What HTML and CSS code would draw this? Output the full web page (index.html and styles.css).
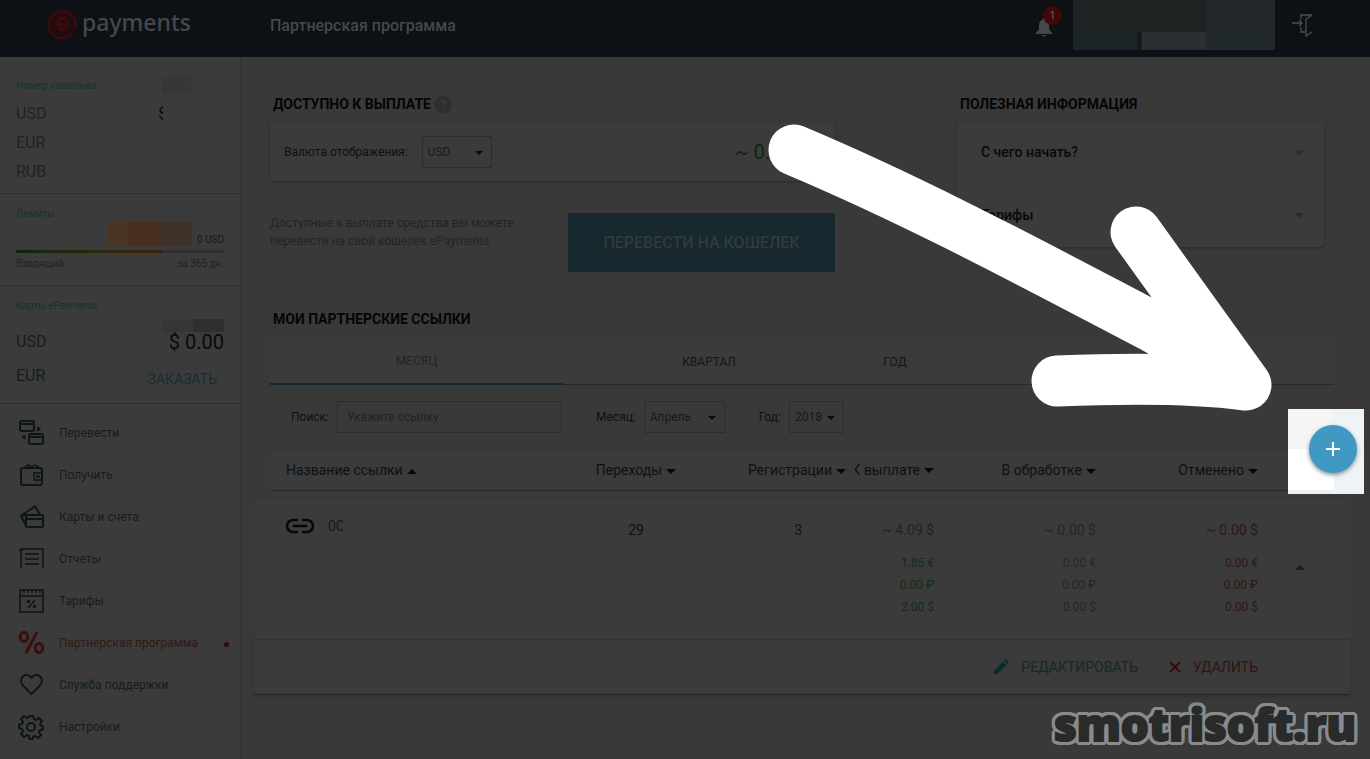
FILE: index.html
```html
<!DOCTYPE html>
<html lang="ru">
<head>
<meta charset="utf-8">
<title>Партнерская программа</title>
<link rel="stylesheet" href="styles.css">
</head>
<body>
<header class="topbar">
  <a class="logo" href="#">
    <svg width="32" height="34" viewBox="0 0 32 34" fill="none" stroke="#3c0b0e"><circle cx="16" cy="17" r="15" fill="#220b0f" stroke="none"/><path d="M24 28A13.500 13.500 0 1 1 28.500 20" stroke-width="2"/><path d="M11 18h9c2-6-5-9-8-4-3 6 1 11 7 8" stroke-width="3"/></svg>
    <span>payments</span>
  </a>
  <h1 class="page-title">Партнерская программа</h1>
  <div class="tools">
    <button class="bell" aria-label="Уведомления">
      <svg width="18" height="20" viewBox="0 0 18 20" fill="#44484a"><path d="M9 1c1 0 1.500.6 1.500 1.500C13 3.500 14 6 14 9v3l3 4v1H1v-1l3-4V9c0-3 1-5.500 3.500-6.500C7.500 1.600 8 1 9 1zM7 18h4c0 2-4 2-4 0z"/></svg>
      <span class="badge">1</span>
    </button>
    <div class="account"><i class="a1"></i><i class="a2"></i><i class="a3"></i><i class="a4"></i><i class="a5"></i><i class="a6"></i></div>
    <button class="exit" aria-label="Выход">
      <svg width="22" height="24" viewBox="0 0 22 24" fill="none" stroke="#4b4f52" stroke-width="1.300"><path d="M0 10h10M7 7l3 3-3 3M9 6V2h11M9 14v5h4M20 2l-6 4v17l6-4"/></svg>
    </button>
  </div>
</header>
<div class="layout">
  <aside class="sidebar">
    <section class="wallet">
      <h2 class="side-title">Номер кошелька</h2>
      <div class="row"><span>USD</span><b class="cut">$</b></div>
      <div class="row"><span>EUR</span></div>
      <div class="row"><span>RUB</span></div>
      <div class="mask"></div>
    </section>
    <section class="limits">
      <h2 class="side-title">Лимиты</h2>
      <div class="amount"><i></i><span class="clip">0 USD</span></div>
      <div class="bar"><div class="fill"></div></div>
      <div class="captions"><span>Входящий</span><span>за 365 дн.</span></div>
    </section>
    <section class="cards">
      <h2 class="side-title">Карты ePayments</h2>
      <div class="card-mask"></div>
      <div class="row strong"><span>USD</span><span class="sum">$ 0.00</span></div>
      <div class="row strong"><span>EUR</span><a class="order" href="#">ЗАКАЗАТЬ</a></div>
    </section>
    <nav class="nav">
      <a href="#"><svg viewBox="0 0 26 26"><rect x="2" y="1" width="14" height="10" rx="2"/><path d="M2 4h14M11 17h14"/><rect x="11" y="14" width="14" height="10" rx="2"/><path d="M19.500 7v4l3-2zM7 15v4l-3-2z" fill="#0d1517" stroke-width="1"/></svg>Перевести</a>
      <a href="#"><svg viewBox="0 0 26 26"><rect x="3" y="6" width="21" height="17" rx="2"/><path d="M6 6l4-3 4 2 2-2 4 1v2" stroke-width="1.500"/><path d="M24 11h-8v7h8M19 14h2v1h-2z" stroke-width="1.500"/></svg>Получить</a>
      <a href="#"><svg viewBox="0 0 26 26"><rect x="8" y="11" width="17" height="12" rx="1"/><path d="M8 15h17M8 22L3 11.500 17 2.500l5 8M5 11h5"/></svg>Карты и счета</a>
      <a href="#"><svg viewBox="0 0 26 26" class="thin"><path d="M3 22V3h22v19M1 4h4M7 8h14M7 13h14M7 18h14"/></svg>Отчеты</a>
      <a href="#"><svg viewBox="0 0 26 26" class="thin"><path d="M2 2h23v22H2zM2 8h23M6 2v3M10 2v3M14 2v3M18 2v3M22 2v3M17 12l-7 8"/><circle cx="10.500" cy="13.500" r="1"/><circle cx="16.500" cy="18.500" r="1"/></svg>Тарифы</a>
      <a href="#" class="current"><svg viewBox="0 0 26 26"><ellipse cx="6" cy="7" rx="3.700" ry="4.500"/><ellipse cx="21" cy="18" rx="3.700" ry="4.500"/><path d="M19 2L8 23"/></svg>Партнерская программа</a>
      <a href="#"><svg viewBox="0 0 26 26"><path d="M13.500 22L5 13.500C-.5 7 7.500-1.500 13.500 5.500 19.500-1.500 27.500 7 22 13.500z"/></svg>Служба поддержки</a>
      <a href="#"><svg viewBox="0 0 26 26"><circle cx="13" cy="13" r="4"/><path d="M11 2h4l1 3 2 1 3-2 3 3-2 3 1 2 2 .500v3L22 16l-1 2 2 3-3 3-3-2-2 1-.500 2h-3L11 22l-2-1-3 2-3-3 2-3-1-2-3-1v-3l3-1 1-2-2-3 3-3 3 2 2-1z"/></svg>Настройки</a>
    </nav>
  </aside>
  <main class="main">
    <div class="top">
      <section class="payout">
        <h2 class="heading">ДОСТУПНО К ВЫПЛАТЕ <span class="hint">?</span></h2>
        <div class="panel currency">
          <label for="cur">Валюта отображения:</label>
          <span class="select"><select id="cur"><option>USD</option></select></span>
          <span class="balance">~ 0.00 $</span>
        </div>
        <div class="transfer">
          <p>Доступные к выплате средства вы можете перевести на свой кошелек ePayments</p>
          <button class="primary">ПЕРЕВЕСТИ НА КОШЕЛЕК</button>
        </div>
      </section>
      <section class="info">
        <h2 class="heading">ПОЛЕЗНАЯ ИНФОРМАЦИЯ</h2>
        <div class="panel faq">
          <button>С чего начать?<i class="caret"></i></button>
          <button>Тарифы<i class="caret"></i></button>
        </div>
      </section>
    </div>
    <section class="links">
      <h2 class="heading">МОИ ПАРТНЕРСКИЕ ССЫЛКИ</h2>
      <div class="tabs"><button class="active">МЕСЯЦ</button><button>КВАРТАЛ</button><button>ГОД</button></div>
      <form class="filters">
        <label for="q">Поиск:</label><input id="q" type="text" placeholder="Укажите ссылку">
        <label for="m" class="month">Месяц:</label><span class="select wide"><select id="m"><option>Апрель</option></select></span>
        <label for="y" class="year">Год:</label><span class="select narrow"><select id="y"><option>2018</option></select></span>
      </form>
      <table class="grid">
        <colgroup><col class="edge"><col><col class="c-num"><col class="c-reg"><col class="c-pay"><col class="c-num"><col class="c-num"><col class="c-end"><col class="edge"></colgroup>
        <thead><tr>
          <td></td><th class="name">Название ссылки<i class="caret up"></i></th><th class="mid">Переходы<i class="caret"></i></th><th class="reg">Регистрации<i class="caret"></i></th><th><div class="pay">К выплате<i class="caret"></i></div></th><th>В обработке<i class="caret"></i></th><th>Отменено<i class="caret"></i></th><th></th><td></td>
        </tr></thead>
        <tbody>
          <tr class="data">
            <td></td>
            <td class="name"><a href="#"><svg width="28" height="16" viewBox="0 0 28 16" fill="none" stroke="#080808" stroke-width="2.500"><path d="M12 2H7a6 6 0 0 0 0 12h5M16 2h5a6 6 0 0 1 0 12h-5M7 8h14"/></svg><span class="link-id">0C</span></a></td>
            <td class="mid">29</td><td class="count">3</td>
            <td class="green"><b>~ 4.09 $</b><span>1.85 €</span><span>0.00 ₽</span><span>2.00 $</span></td>
            <td class="grey"><b>~ 0.00 $</b><span>0.00 €</span><span>0.00 ₽</span><span>0.00 $</span></td>
            <td class="red"><b>~ 0.00 $</b><span>0.00 €</span><span>0.00 ₽</span><span>0.00 $</span></td>
            <td class="toggle"><button aria-label="Свернуть"><i class="caret up"></i></button></td><td></td>
          </tr>
          <tr class="actions"><td colspan="9"><div>
            <button class="edit"><svg width="16" height="16" viewBox="0 0 16 16" fill="#0b2d2a"><path d="M1 15v-3.500L10 2.500 13.500 6 4.500 15zM11 1.500l1-1h1.500L15.500 2.500V4l-1 1z"/></svg>РЕДАКТИРОВАТЬ</button>
            <button class="delete"><svg width="12" height="12" viewBox="0 0 12 12" stroke="#300b0b" stroke-width="2"><path d="M1 1l10 10M11 1L1 11"/></svg>УДАЛИТЬ</button>
          </div></td></tr>
        </tbody>
      </table>
      <div class="spotlight"><button class="add" aria-label="Добавить ссылку"><svg width="14" height="14" viewBox="0 0 14 14" stroke="#fff" stroke-width="2"><path d="M7 0v14M0 7h14"/></svg></button></div>
    </section>
  </main>
</div>
<svg class="arrow" width="500" height="300" viewBox="780 120 500 300" fill="none" stroke="#fff" stroke-width="51" stroke-linecap="round" stroke-linejoin="round"><path d="M794 150C920 203 1040 268 1153 327L1234 374M1136 232L1246 385M1057 381Q1180 376 1245 385"/></svg>
<div class="watermark">smotrisoft.ru</div>
</body>
</html>
```
FILE: styles.css
```css
* { box-sizing: border-box; }
body { margin: 0; position: relative; min-height: 100vh; overflow: hidden; background: #393939; color: #101010; font: 12px/16px Roboto, sans-serif; display: flex; flex-direction: column; }
h1, h2, p { margin: 0; font-weight: 400; }
button { border: 0; padding: 0; background: none; color: inherit; font: inherit; }
a { color: inherit; text-decoration: none; }

.topbar { height: 57px; display: flex; background: #0d1116; color: #45484b; }
.logo { width: 270px; padding: 7px 0 0 47px; display: flex; gap: 3px; align-items: flex-start; font: 500 23px/30px "Noto Sans", sans-serif; }
.page-title { padding-top: 14px; font-size: 16px; font-weight: 500; line-height: 24px; }
.tools { margin-left: auto; padding-right: 56px; display: flex; align-items: flex-start; }
.bell { position: relative; margin: 17px 20px 0 0; height: 20px; }
.badge { position: absolute; left: 8px; top: -11px; width: 19px; height: 19px; border-radius: 50%; background: #400806; color: #79615f; font-size: 10px; line-height: 19px; }
.account { width: 202px; height: 50px; display: grid; grid-template: 32px 18px / 64px 5px 64px 1fr; border-radius: 0 0 2px 2px; overflow: hidden; background: #1e2427; }
.a1 { grid-column: 1 / 4; background: #1c2322; }
.a2 { background: #23282a; }
.a3 { background: #1c2427; }
.a4 { background: #15191c; }
.a5 { background: #2b2f34; }
.a6 { background: #22292c; }
.exit { margin: 13px 0 0 17px; height: 24px; }

.layout { flex: 1; display: flex; }
.sidebar { width: 241px; flex: none; background: #3b3b3b; border-right: 1px solid #323232; }
.sidebar section { position: relative; padding: 14px 16px 0; border-bottom: 1px solid #2f2f2f; }
.side-title { color: #12332e; font-size: 10px; line-height: 12px; }
.row { display: flex; justify-content: space-between; align-items: center; height: 29px; color: #222; font-size: 16px; }
.sidebar .wallet { padding: 23px 16px 7px; }
.wallet .side-title { margin-bottom: 7px; }
.cut { width: 5px; margin-right: 61px; overflow: hidden; color: #080808; font-weight: 400; }
.mask { position: absolute; left: 162px; top: 19px; width: 29px; height: 18px; background: #373737; }
.sidebar .limits { padding-bottom: 14px; }
.amount { display: flex; justify-content: flex-end; align-items: flex-end; height: 28px; font-size: 10px; color: #181818; }
.amount i { width: 84px; height: 24px; margin-bottom: 2px; background: linear-gradient(90deg, #4a3424 0 20px, #472e20 20px 52px, #403126 52px); }
.clip { width: 32px; display: flex; justify-content: flex-end; overflow: hidden; }
.bar { height: 3px; margin-top: 2px; background: #303030; }
.fill { width: 70%; height: 3px; background: linear-gradient(90deg, #072b0b, #292709 45%, #392508 80%, #43200b); }
.captions { display: flex; justify-content: space-between; padding-top: 4px; font-size: 10px; line-height: 14px; color: #222; }
.sidebar .cards { padding-bottom: 10px; }
.card-mask { width: 62px; height: 13px; margin: 7px 0 -7px auto; background: linear-gradient(90deg, #363636 50%, #2f2f2f 50%); }
.row.strong { height: 34px; color: #161b1d; }
.sum { color: #090909; font-size: 20px; }
.order { padding: 6px 7px 0 0; color: #1a2b32; font-size: 14px; }
.nav { padding: 8px 0; }
.nav a { position: relative; height: 42px; padding-left: 18px; display: flex; align-items: center; gap: 15px; color: #171b1c; font-size: 12px; white-space: nowrap; }
.nav svg { width: 26px; height: 26px; fill: none; stroke: #0d1517; stroke-width: 2; }
.nav .thin { stroke-width: 1.5; }
.nav .current { color: #361714; }
.nav .current svg { stroke: #3e0e0b; stroke-width: 3; }
.nav .current::after { content: ""; width: 5px; height: 5px; margin: 2px 11px 0 auto; border-radius: 50%; background: #300909; }

.main { flex: 1; min-width: 0; padding: 37px 20px 0 13px; }
.heading { padding-left: 3px; color: #050505; font-size: 14px; font-weight: 700; line-height: 20px; }
.top { margin: 0 26px 0 16px; display: grid; grid-template-columns: 565fr 367fr; gap: 122px; }
.hint { display: inline-block; width: 18px; height: 18px; border-radius: 50%; background: #2f2f2f; color: #3b3b3b; font-size: 12px; line-height: 18px; text-align: center; }
.panel { margin-top: 8px; background: #3b3b3b; box-shadow: 0 1px 2px #2a2a2a; }
.currency { height: 59px; padding: 0 14px; display: flex; align-items: center; }
.select { position: relative; width: 70px; height: 32px; margin-left: 14px; }
.select select { width: 100%; height: 100%; padding: 0 5px; appearance: none; border: 1px solid #2d2d2d; border-radius: 0; background: transparent; color: #141a1c; font: 12px/16px Roboto, sans-serif; }
.select::after { content: ""; position: absolute; right: 9px; top: 15px; border: 4px solid transparent; border-top-color: #0a0a0a; border-bottom: 0; }
.balance { width: 86px; margin-left: auto; color: #0f2513; font-size: 20px; }
.transfer { display: flex; justify-content: space-between; margin-top: 32px; }
.transfer p { width: 264px; padding-top: 1px; color: #242424; line-height: 18px; }
.primary { width: 267px; height: 59px; background: #17282e; color: #323a3d; font-size: 16px; font-weight: 500; }
.faq { padding: 0 20px 0 24px; }
.faq button { display: flex; justify-content: space-between; align-items: center; width: 100%; height: 60px; font-size: 14px; font-weight: 500; color: #090909; }
.faq button + button { height: 65px; border-top: 1px solid #363636; }
.faq .caret { border-top-color: #2c2c2c; }
.caret { display: inline-block; margin-left: 4px; border: 5px solid transparent; border-top-color: #070707; border-bottom: 0; vertical-align: middle; }
.caret.up { border-top: 0; border-bottom: 5px solid #070707; }

.links { position: relative; margin-top: 37px; }
.links .heading { padding-left: 19px; }
.tabs { margin: 9px 16px 0; height: 47px; display: grid; grid-template-columns: 293fr 292fr 80fr 399fr; border-bottom: 1px solid #292929; background: #3b3b3b; }
.tabs button { height: 47px; color: #151515; }
.tabs .active { border-bottom: 2px solid #142631; color: #242424; }
.filters { margin: 0 16px; height: 65px; padding-left: 21px; display: flex; align-items: center; background: #393939; border-bottom: 1px solid #353535; }
.filters input { width: 225px; height: 32px; margin-left: 8px; padding: 0 9px; border: 1px solid #2d2d2d; background: transparent; font: 12px/16px Roboto, sans-serif; }
.filters input::placeholder { color: #222; }
.filters .select { margin-left: 8px; }
.month, .year { margin-left: 34px; }
.filters .wide { width: 81px; }
.filters .narrow { width: 55px; }

.grid { width: 100%; table-layout: fixed; border-collapse: separate; border-spacing: 0; }
.edge { width: 16px; }
.c-num { width: 162px; }
.c-reg { width: 138px; }
.c-pay { width: 79px; }
.c-end { width: 76px; }
.grid th, .grid td { padding: 0; text-align: right; font-size: 14px; font-weight: 400; }
.grid th { height: 41px; background: #3b3b3b; border-bottom: 1px solid #292929; white-space: nowrap; }
.grid .name { padding-left: 16px; text-align: left; }
.grid .mid { text-align: center; }
.grid th.reg { padding-right: 9px; }
.pay { display: flex; justify-content: flex-end; align-items: center; overflow: hidden; }
.grid tbody::before { content: ""; display: table-row; height: 8px; }
.grid .data td { height: 141px; padding-top: 22px; vertical-align: top; background: #3b3b3b; border-top: 1px solid #373737; border-bottom: 1px solid #343434; }
.grid .data .name { padding-top: 18px; }
.name a { display: flex; align-items: center; gap: 14px; color: #171717; }
.link-id { width: 15px; overflow: hidden; }
.grid .count { padding-right: 53px; }
.data b, .data span { display: block; font-weight: 400; line-height: 16px; }
.data b { margin-bottom: 14px; }
.data td > span { height: 22px; font-size: 12px; line-height: 22px; }
.green { color: #132b19; }
.grey { color: #262626; }
.red { color: #2d1614; }
.grid .data .toggle { padding: 58px 29px 0 0; }
.toggle button { display: block; margin-left: auto; }
.toggle .caret { border-bottom-color: #1b1b1b; }
.grid .actions td { height: 55px; background: #3b3b3b; border-bottom: 1px solid #272727; box-shadow: 0 2px 3px #303030; }
.actions div { display: flex; justify-content: flex-end; gap: 31px; padding-right: 92px; }
.actions button { display: flex; align-items: center; gap: 12px; }
.edit { color: #162828; }
.delete { color: #301412; }

.spotlight { position: absolute; right: -14px; top: 100px; width: 76px; height: 85px; padding: 16px 0 0 21px; background: linear-gradient(#f4f5f5 0 40px, #fff 40px 81px, #edf0f2 81px) 0 0 / 46px 100% no-repeat, #eef3f5; }
.add { width: 48px; height: 48px; display: grid; place-items: center; border-radius: 50%; background: #4099c2; box-shadow: 0 2px 4px #8a9499; }

.arrow { position: absolute; left: 780px; top: 120px; overflow: visible; pointer-events: none; }
.watermark { position: absolute; right: 14px; bottom: 5px; color: #292b2a; font: 800 44px/60px "Open Sans", sans-serif; -webkit-text-stroke: 2px #292b2a; text-shadow: 4px 0 #8a8a8a, -4px 0 #8a8a8a, 0 4px #8a8a8a, 0 -4px #8a8a8a, 3px 3px #8a8a8a, -3px 3px #8a8a8a, 3px -3px #8a8a8a, -3px -3px #8a8a8a, 4px 2px #8a8a8a, -4px 2px #8a8a8a, 4px -2px #8a8a8a, -4px -2px #8a8a8a, 2px 4px #8a8a8a, -2px 4px #8a8a8a, 2px -4px #8a8a8a, -2px -4px #8a8a8a; }
```
